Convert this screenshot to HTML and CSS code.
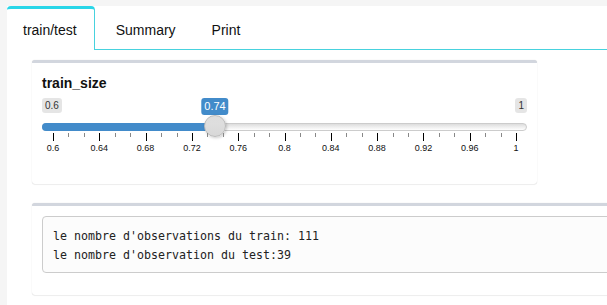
FILE: index.html
```html
<!DOCTYPE html>
<html>
<head>
<meta charset="utf-8">
<link rel="stylesheet" href="styles.css">
</head>
<body>
<div class="panel">
  <div class="nav">
    <div class="tab active">train/test</div>
    <div class="tab tab-mid">Summary</div>
    <div class="tab">Print</div>
  </div>
  <div class="content">
    <div class="box box-slider">
      <div class="label">train_size</div>
      <div class="slider">
        <span class="badge badge-min">0.6</span>
        <span class="badge badge-max">1</span>
        <span class="badge badge-single" style="left:173px">0.74</span>
        <div class="line"></div>
        <div class="bar" style="width:173px"></div>
        <div class="handle" style="left:162px"></div>
        <div class="grid">
          <span class="pol" style="left:11px"></span>
          <span class="pol small" style="left:26.4px"></span>
          <span class="pol small" style="left:41.9px"></span>
          <span class="pol" style="left:57.3px"></span>
          <span class="pol small" style="left:72.7px"></span>
          <span class="pol small" style="left:88.2px"></span>
          <span class="pol" style="left:103.6px"></span>
          <span class="pol small" style="left:119px"></span>
          <span class="pol small" style="left:134.5px"></span>
          <span class="pol" style="left:149.9px"></span>
          <span class="pol small" style="left:165.3px"></span>
          <span class="pol small" style="left:180.8px"></span>
          <span class="pol" style="left:196.2px"></span>
          <span class="pol small" style="left:211.6px"></span>
          <span class="pol small" style="left:227.1px"></span>
          <span class="pol" style="left:242.5px"></span>
          <span class="pol small" style="left:257.9px"></span>
          <span class="pol small" style="left:273.4px"></span>
          <span class="pol" style="left:288.8px"></span>
          <span class="pol small" style="left:304.2px"></span>
          <span class="pol small" style="left:319.7px"></span>
          <span class="pol" style="left:335.1px"></span>
          <span class="pol small" style="left:350.5px"></span>
          <span class="pol small" style="left:366px"></span>
          <span class="pol" style="left:381.4px"></span>
          <span class="pol small" style="left:396.8px"></span>
          <span class="pol small" style="left:412.3px"></span>
          <span class="pol" style="left:427.7px"></span>
          <span class="pol small" style="left:443.1px"></span>
          <span class="pol small" style="left:458.6px"></span>
          <span class="pol" style="left:474px"></span>
          <span class="txt" style="left:11px">0.6</span>
          <span class="txt" style="left:57.3px">0.64</span>
          <span class="txt" style="left:103.6px">0.68</span>
          <span class="txt" style="left:149.9px">0.72</span>
          <span class="txt" style="left:196.2px">0.76</span>
          <span class="txt" style="left:242.5px">0.8</span>
          <span class="txt" style="left:288.8px">0.84</span>
          <span class="txt" style="left:335.1px">0.88</span>
          <span class="txt" style="left:381.4px">0.92</span>
          <span class="txt" style="left:427.7px">0.96</span>
          <span class="txt" style="left:474px">1</span>
        </div>
      </div>
    </div>
    <div class="box box-output">
      <pre class="output">le nombre d'observations du train: 111
le nombre d'observation du test:39</pre>
    </div>
  </div>
</div>
</body>
</html>
```

FILE: styles.css
```css
html, body {
  margin: 0;
  padding: 0;
}
body {
  background: #f5f5f5;
  overflow: hidden;
  font-family: "Liberation Sans", Arial, sans-serif;
  color: #333;
}
.panel {
  margin: 6px 0 0 7px;
  background: #fff;
  min-height: 299px;
}
.nav {
  display: flex;
  height: 43px;
  border-bottom: 1px solid #47d2de;
}
.tab {
  box-sizing: border-box;
  height: 44px;
  padding: 2px 16px 0;
  margin-right: 5px;
  border-top: 3px solid transparent;
  border-right: 1px solid transparent;
  font-size: 14px;
  line-height: 38px;
  color: #111;
}
.tab.active {
  border-top-color: #29d6e8;
  border-right-color: #47d2de;
  border-radius: 4px 4px 0 0;
  background: #fff;
  margin-bottom: -1px;
  padding-right: 17px;
}
.tab-mid {
  margin-right: 3px;
}
.content {
  padding: 10px 0 0 25px;
}
.box {
  box-sizing: border-box;
  background: #fff;
  border-top: 3px solid #d2d6de;
  border-radius: 3px;
  box-shadow: 0 0 1px rgba(0, 0, 0, 0.18), 0 1px 1px rgba(0, 0, 0, 0.06);
  padding: 10px;
}
.box-slider {
  width: 505px;
  padding-bottom: 28px;
}
.label {
  font-weight: bold;
  font-size: 14px;
  line-height: 20px;
  color: #111;
  margin-bottom: 5px;
}
.slider {
  position: relative;
  height: 58px;
}
.badge {
  position: absolute;
  top: 0;
  padding: 1px 3px;
  border-radius: 3px;
  line-height: 1.333;
  white-space: nowrap;
}
.badge-min, .badge-max {
  font-size: 10px;
  background: rgba(0, 0, 0, 0.1);
  color: #333;
}
.badge-min { left: 0; }
.badge-max { right: 0; }
.badge-single {
  font-size: 11px;
  background: #428bca;
  color: #fff;
  transform: translateX(-50%);
}
.line {
  position: absolute;
  top: 25px;
  left: 0;
  right: 0;
  height: 8px;
  box-sizing: border-box;
  border: 1px solid #cccccc;
  border-radius: 16px;
  background: linear-gradient(to bottom, #dddddd 0%, #ffffff 100%);
}
.bar {
  position: absolute;
  top: 25px;
  left: 0;
  height: 8px;
  background: #428bca;
  border-radius: 8px 0 0 8px;
}
.handle {
  position: absolute;
  top: 17px;
  width: 22px;
  height: 22px;
  box-sizing: border-box;
  border: 1px solid #bbbbbb;
  border-radius: 50%;
  background: linear-gradient(to bottom, #dddddd 0%, #dedede 40%, #d8d8d8 100%);
  box-shadow: 1px 1px 3px rgba(0, 0, 0, 0.2);
}
.grid {
  position: absolute;
  top: 35px;
  left: 0;
  right: 0;
  height: 23px;
}
.pol {
  position: absolute;
  top: 0;
  width: 1px;
  height: 8px;
  background: #000;
}
.pol.small {
  height: 4px;
  background: #888;
}
.txt {
  position: absolute;
  top: 11px;
  font-size: 9px;
  line-height: 9px;
  color: #111;
  transform: translateX(-50%);
  white-space: nowrap;
}
.box-output {
  width: 660px;
  margin-top: 19px;
}
.output {
  margin: 0 0 12px;
  padding: 10px 10px 8px;
  border: 1px solid #cccccc;
  border-radius: 4px;
  background: #fcfcfc;
  font-family: "DejaVu Sans Mono", monospace;
  font-size: 11.63px;
  line-height: 18.5px;
  color: #222;
}
```
